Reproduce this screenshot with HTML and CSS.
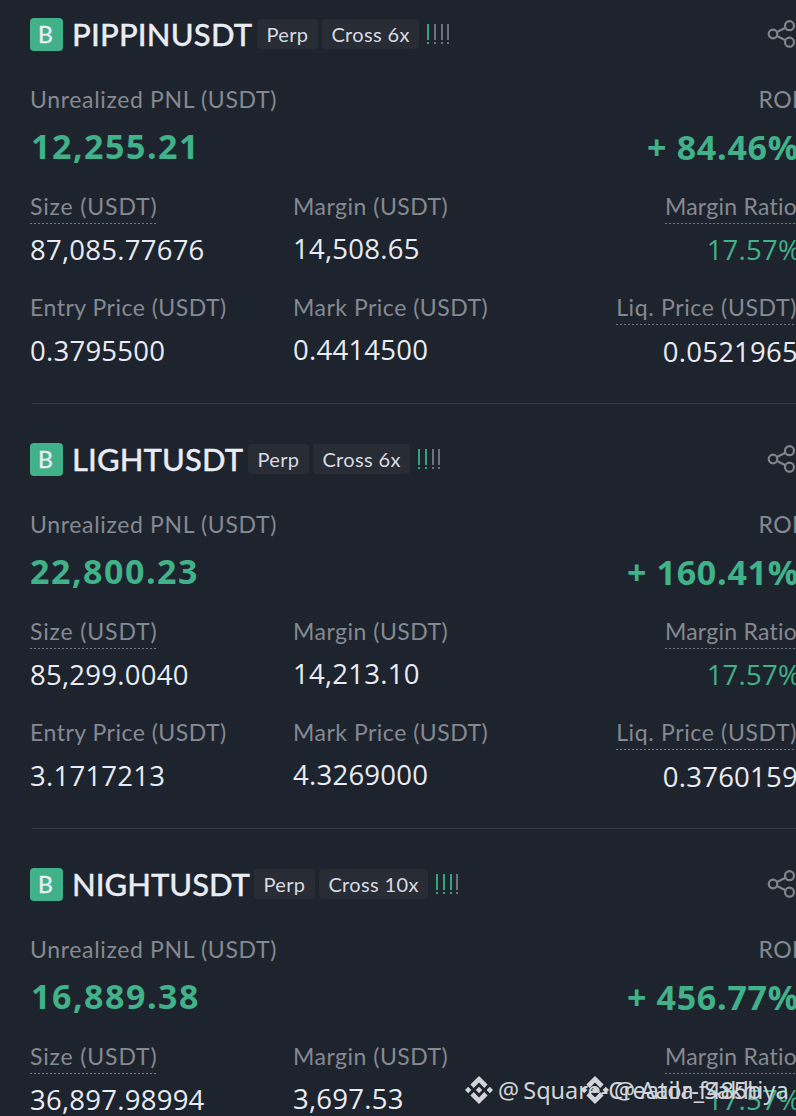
FILE: index.html
```html
<!DOCTYPE html>
<html lang="en">
<head>
    <meta charset="UTF-8">
    <meta name="viewport" content="width=device-width, initial-scale=1.0">
    <title>Positions</title>
    <link rel="stylesheet" href="styles.css">
</head>
<body>

<svg class="sprite" width="0" height="0">
    <symbol id="share" viewBox="0 0 30 28">
        <circle cx="6" cy="14" r="4.3"/>
        <circle cx="22.5" cy="5.7" r="4.5"/>
        <circle cx="22.5" cy="22.2" r="4.5"/>
        <path d="M9.9 12 L18.5 7.7 M9.9 16 L18.5 20.2"/>
    </symbol>
    <symbol id="diamond" viewBox="0 0 28 28">
        <path d="M14 0 L22.6 8.6 L19.3 11.9 L14 6.6 L8.7 11.9 L5.4 8.6 Z"/>
        <path d="M14 28 L22.6 19.4 L19.3 16.1 L14 21.4 L8.7 16.1 L5.4 19.4 Z"/>
        <path d="M14 10.8 L17.2 14 L14 17.2 L10.8 14 Z"/>
        <path d="M3.2 10.8 L6.4 14 L3.2 17.2 L0 14 Z"/>
        <path d="M24.8 10.8 L28 14 L24.8 17.2 L21.6 14 Z"/>
    </symbol>
</svg>

<main class="positions">
    <section class="position">
        <header class="position-header">
            <span class="side">B</span>
            <h2 class="symbol pippin">PIPPINUSDT</h2>
            <span class="tag">Perp</span>
            <span class="tag">Cross 6x</span>
            <span class="level"><i class="on"></i><i></i><i></i><i></i></span>
            <svg class="share"><use href="#share"/></svg>
        </header>
        <div class="pnl">
            <div class="cell">
                <span class="label wide">Unrealized PNL (USDT)</span>
                <span class="amount one">12,255.21</span>
            </div>
            <div class="cell right">
                <span class="label short">ROI</span>
                <span class="amount roi">+ 84.46%</span>
            </div>
        </div>
        <div class="stats">
            <div class="cell"><span class="label dotted size">Size (USDT)</span><span class="value">87,085.77676</span></div>
            <div class="cell mid"><span class="label">Margin (USDT)</span><span class="value">14,508.65</span></div>
            <div class="cell right"><span class="label dotted ratio">Margin Ratio</span><span class="value green">17.57%</span></div>
        </div>
        <div class="stats">
            <div class="cell"><span class="label">Entry Price (USDT)</span><span class="value">0.3795500</span></div>
            <div class="cell mid"><span class="label">Mark Price (USDT)</span><span class="value">0.4414500</span></div>
            <div class="cell right"><span class="label dotted liq">Liq. Price (USDT)</span><span class="value">0.0521965</span></div>
        </div>
    </section>

    <section class="position">
        <header class="position-header">
            <span class="side">B</span>
            <h2 class="symbol light">LIGHTUSDT</h2>
            <span class="tag">Perp</span>
            <span class="tag">Cross 6x</span>
            <span class="level"><i class="on"></i><i class="on"></i><i></i><i></i></span>
            <svg class="share"><use href="#share"/></svg>
        </header>
        <div class="pnl">
            <div class="cell">
                <span class="label wide">Unrealized PNL (USDT)</span>
                <span class="amount">22,800.23</span>
            </div>
            <div class="cell right">
                <span class="label short">ROI</span>
                <span class="amount roi">+ 160.41%</span>
            </div>
        </div>
        <div class="stats">
            <div class="cell"><span class="label dotted size">Size (USDT)</span><span class="value">85,299.0040</span></div>
            <div class="cell mid"><span class="label">Margin (USDT)</span><span class="value">14,213.10</span></div>
            <div class="cell right"><span class="label dotted ratio">Margin Ratio</span><span class="value green">17.57%</span></div>
        </div>
        <div class="stats">
            <div class="cell"><span class="label">Entry Price (USDT)</span><span class="value">3.1717213</span></div>
            <div class="cell mid"><span class="label">Mark Price (USDT)</span><span class="value">4.3269000</span></div>
            <div class="cell right"><span class="label dotted liq">Liq. Price (USDT)</span><span class="value">0.3760159</span></div>
        </div>
    </section>

    <section class="position">
        <header class="position-header">
            <span class="side">B</span>
            <h2 class="symbol night">NIGHTUSDT</h2>
            <span class="tag">Perp</span>
            <span class="tag">Cross 10x</span>
            <span class="level"><i class="on"></i><i class="on"></i><i class="on"></i><i></i></span>
            <svg class="share"><use href="#share"/></svg>
        </header>
        <div class="pnl">
            <div class="cell">
                <span class="label wide">Unrealized PNL (USDT)</span>
                <span class="amount one">16,889.38</span>
            </div>
            <div class="cell right">
                <span class="label short">ROI</span>
                <span class="amount roi">+ 456.77%</span>
            </div>
        </div>
        <div class="stats">
            <div class="cell"><span class="label dotted size">Size (USDT)</span><span class="value">36,897.98994</span></div>
            <div class="cell mid"><span class="label">Margin (USDT)</span><span class="value">3,697.53</span></div>
            <div class="cell right"><span class="label dotted ratio">Margin Ratio</span><span class="value green">17.57%</span></div>
        </div>
    </section>
</main>

<div class="watermark first"><svg><use href="#diamond"/></svg><span>@ Square-Creator-f485b</span></div>
<div class="watermark second"><svg><use href="#diamond"/></svg><span>@ Aaila_Sakhiya</span></div>

</body>
</html>
```
FILE: styles.css
```css
body {
    margin: 0;
    height: 1116px;
    overflow: hidden;
    position: relative;
    background-color: #1e242d;
    color: #eaecf4;
    font-family: Lato, sans-serif;
}
.sprite {
    display: block;
}
.positions {
    height: 1116px;
    overflow: hidden;
}
.position {
    height: 425px;
    box-sizing: border-box;
    padding: 18px 0 0 30px;
    background: linear-gradient(#333841, #333841) 32px 403px / 100% 1px no-repeat;
}
.position-header {
    display: flex;
    align-items: center;
    height: 32px;
}
.side {
    width: 33px;
    height: 33px;
    border-radius: 4px;
    background-color: #40b188;
    font-size: 23px;
    line-height: 32px;
    text-align: center;
    text-indent: -2px;
    -webkit-text-stroke: 0.4px #eaecf4;
}
.symbol {
    margin: 0 5px 0 9px;
    font-size: 31px;
    line-height: 32px;
    font-weight: 500;
    -webkit-text-stroke: 0.3px #eaecf4;
    white-space: nowrap;
}
.pippin {
    width: 180px;
    letter-spacing: 0.2px;
}
.light {
    width: 171px;
    letter-spacing: 0.1px;
}
.night {
    width: 177px;
}
.tag {
    height: 30px;
    margin-right: 4px;
    padding: 0 9.5px;
    border-radius: 4px;
    background-color: #272c35;
    color: #d8dae1;
    font-size: 20px;
    line-height: 31px;
    letter-spacing: 0.35px;
    white-space: nowrap;
}
.level {
    display: flex;
    gap: 4.7px;
    margin-left: 4px;
}
.level i {
    width: 2px;
    height: 20px;
    background: linear-gradient(#6d727b 16px, transparent 16px, transparent 18px, #6d727b 18px);
}
.level .on {
    background: linear-gradient(#35a37b 16px, transparent 16px, transparent 18px, #35a37b 18px);
}
.share {
    width: 30px;
    height: 28px;
    margin-left: auto;
    margin-right: -1px;
    fill: none;
    stroke: #80848b;
    stroke-width: 2.2;
}
.pnl {
    display: flex;
    justify-content: space-between;
    height: 139px;
    padding-top: 33px;
    box-sizing: border-box;
}
.stats {
    display: grid;
    grid-template-columns: 263px 1fr auto;
    height: 101px;
}
.cell {
    display: flex;
    flex-direction: column;
    align-items: flex-start;
}
.cell.right {
    align-items: flex-end;
    margin-right: -1px;
}
.label {
    height: 36px;
    box-sizing: border-box;
    color: #858991;
    font-size: 23px;
    line-height: 32px;
    letter-spacing: 0.5px;
    white-space: nowrap;
}
.label.wide {
    letter-spacing: 0.65px;
}
.label.short {
    margin-right: -2px;
}
.dotted {
    background: repeating-linear-gradient(90deg, #737881 0 2px, transparent 2px 4px) 0 34px / 100% 1px no-repeat;
}
.dotted.size {
    letter-spacing: 0.85px;
}
.dotted.ratio {
    letter-spacing: 0.25px;
}
.dotted.liq {
    letter-spacing: 0.65px;
}
.stats .label {
    padding-top: 1px;
}
.value {
    font-family: "Open Sans", sans-serif;
    font-size: 27.5px;
    line-height: 38px;
    letter-spacing: 0.25px;
    margin-top: 6px;
}
.mid .value {
    margin-top: 5px;
}
.right .value {
    margin-top: 7px;
    margin-right: -1px;
}
.right .green {
    margin-top: 6px;
    margin-right: -4px;
}
.amount {
    color: #40b188;
    font-family: "Open Sans", sans-serif;
    font-size: 34px;
    line-height: 44px;
    font-weight: 700;
    letter-spacing: 1.5px;
    margin-top: 5px;
}
.amount.one {
    padding-left: 1px;
}
.amount.roi {
    margin-top: 6px;
    margin-right: -2px;
    letter-spacing: 0.7px;
}
.green {
    color: #40b188;
}
/* Account handles, laid over the last card */
.watermark {
    position: absolute;
    top: 1075px;
    display: flex;
    align-items: center;
    gap: 5px;
    height: 30px;
    color: #d2d4d9;
    font-family: "Noto Sans", sans-serif;
    font-size: 23.5px;
    line-height: 30px;
    white-space: nowrap;
}
.watermark svg {
    width: 28px;
    height: 28px;
    fill: #d2d4d9;
}
.first {
    left: 465px;
}
.first span {
    word-spacing: -2px;
}
.second {
    left: 581px;
}
.second span {
    word-spacing: -1px;
}
```
